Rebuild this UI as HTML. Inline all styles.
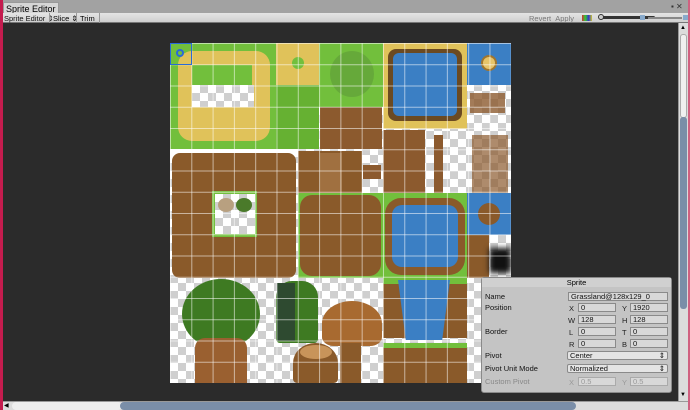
<!DOCTYPE html><html><head><style>
*{margin:0;padding:0;box-sizing:border-box}
body{width:690px;height:410px;overflow:hidden;background:#a2a2a2;font-family:"Liberation Sans",sans-serif;font-size:8px;position:relative}
.a{position:absolute}
.chk{background-color:#fff;background-image:linear-gradient(45deg,#cfcfcf 25%,transparent 25%,transparent 75%,#cfcfcf 75%),linear-gradient(45deg,#cfcfcf 25%,transparent 25%,transparent 75%,#cfcfcf 75%);background-size:16px 16px;background-position:0 0,8px 8px}
.g{background:#72bf3c}.y{background:#e0c25a}.b{background:#3b7fc4}.d{background:#8a5a2a}.w{background:#8c5a2e}
.lbl{position:absolute;left:4px;color:#111}
.fld{position:absolute;height:9px;background:#d8d8d8;border:1px solid #8a8a8a;font-size:7.5px;line-height:8px;padding-left:2px;color:#111}
.sl{position:absolute;color:#222}
</style></head><body>
<div class="a" style="left:0;top:0;width:3px;height:410px;background:#c41c4e"></div>
<div class="a" style="left:688px;top:0;width:2px;height:410px;background:#d06080"></div>
<div class="a" style="left:3px;top:2px;width:56px;height:12px;background:#d6d6d6;border:1px solid #999;border-bottom:none;font-size:9px;padding:1px 2px">Sprite Editor</div>
<div class="a" style="left:3px;top:13px;width:685px;height:10px;background:linear-gradient(#e4e4e4,#cfcfcf);border-bottom:1px solid #777"></div>
<div class="a" style="left:4px;top:14px;font-size:7.5px;color:#111">Sprite Editor ⇕</div>
<div class="a" style="left:49px;top:13px;width:1px;height:10px;background:#999"></div>
<div class="a" style="left:53px;top:14px;font-size:7.5px">Slice ⇕</div>
<div class="a" style="left:76px;top:13px;width:1px;height:10px;background:#999"></div>
<div class="a" style="left:80px;top:14px;font-size:7.5px">Trim</div>
<div class="a" style="left:99px;top:13px;width:1px;height:10px;background:#999"></div>
<div class="a" style="left:529px;top:14px;font-size:7.5px;color:#777">Revert &nbsp;Apply</div>
<div class="a" style="left:582px;top:15px;width:10px;height:6px;background:linear-gradient(90deg,#c33,#3c3,#33c,#cc3)"></div>
<div class="a" style="left:599px;top:16px;width:56px;height:3px;background:#333;border-radius:2px"></div>
<div class="a" style="left:598px;top:14px;width:6px;height:6px;background:#ccc;border:1px solid #333;border-radius:50%"></div>
<div class="a" style="left:640px;top:15px;width:5px;height:5px;background:#8ac"></div>
<div class="a" style="left:648px;top:17px;width:34px;height:2px;background:#888"></div>
<div class="a" style="left:683px;top:15px;width:5px;height:5px;background:#8ac"></div>
<div class="a" style="left:671px;top:2px;font-size:8px;color:#333">▪ ✕</div>
<div class="a" style="left:3px;top:23px;width:675px;height:378px;background:#2b2b2b"></div>
<!-- image -->
<div class="a chk" style="left:170px;top:43px;width:341px;height:340px;overflow:hidden">
<div class="a g" style="left:0;top:0;width:106px;height:106px"></div>
<div class="a y" style="left:8px;top:8px;width:92px;height:90px;border-radius:14px"></div>
<div class="a g" style="left:22px;top:22px;width:60px;height:22px"></div>
<div class="a chk" style="left:22px;top:42px;width:62px;height:22px"></div>
<div class="a y" style="left:106px;top:0;width:43px;height:42px"></div>
<div class="a g" style="left:122px;top:14px;width:12px;height:12px;border-radius:50%"></div>
<div class="a" style="left:106px;top:42px;width:43px;height:64px;background:#66b132"></div>
<div class="a g" style="left:149px;top:0;width:64px;height:64px"></div>
<div class="a" style="left:160px;top:8px;width:44px;height:46px;border-radius:50%;background:#66a93a"></div>
<div class="a w" style="left:150px;top:64px;width:62px;height:42px"></div>
<div class="a y" style="left:213px;top:0;width:84px;height:86px"></div>
<div class="a" style="left:218px;top:6px;width:74px;height:72px;background:#6b4a22;border-radius:8px"></div>
<div class="a b" style="left:223px;top:10px;width:64px;height:63px;border-radius:6px"></div>
<div class="a b" style="left:297px;top:0;width:44px;height:42px"></div>
<div class="a" style="left:311px;top:12px;width:16px;height:16px;border-radius:50%;background:#e6c46a;border:2px solid #a0752e"></div>
<div class="a w" style="left:213px;top:87px;width:42px;height:63px"></div>
<div class="a w" style="left:264px;top:92px;width:9px;height:62px"></div>
<div class="a w" style="left:300px;top:50px;width:35px;height:20px;opacity:.8"></div>
<div class="a w" style="left:302px;top:92px;width:36px;height:58px;opacity:.7"></div>
<div class="a" style="left:0;top:106px;width:128px;height:8px;background:#fff"></div>
<div class="a d" style="left:2px;top:110px;width:124px;height:125px;border-radius:8px"></div>
<div class="a g" style="left:42px;top:148px;width:45px;height:46px"></div>
<div class="a chk" style="left:45px;top:151px;width:40px;height:40px;background-color:#fff"></div>
<div class="a" style="left:48px;top:155px;width:16px;height:14px;background:#b8a080;border-radius:50%"></div>
<div class="a" style="left:66px;top:155px;width:16px;height:14px;background:#4a7a2a;border-radius:50%"></div>
<div class="a d" style="left:128px;top:108px;width:64px;height:42px"></div>
<div class="a" style="left:150px;top:110px;width:22px;height:40px;background:#a07040"></div>
<div class="a w" style="left:193px;top:122px;width:18px;height:14px"></div>
<div class="a g" style="left:128px;top:150px;width:85px;height:85px"></div>
<div class="a d" style="left:130px;top:152px;width:81px;height:81px;border-radius:12px"></div>
<div class="a g" style="left:213px;top:150px;width:84px;height:85px"></div>
<div class="a d" style="left:215px;top:155px;width:80px;height:77px;border-radius:16px"></div>
<div class="a b" style="left:222px;top:162px;width:66px;height:62px;border-radius:10px"></div>
<div class="a b" style="left:297px;top:150px;width:44px;height:42px"></div>
<div class="a d" style="left:308px;top:160px;width:22px;height:22px;border-radius:50%"></div>
<div class="a d" style="left:297px;top:192px;width:22px;height:43px"></div>
<div class="a" style="left:319px;top:205px;width:22px;height:25px;background:#111;filter:blur(3px)"></div>
<div class="a" style="left:12px;top:236px;width:78px;height:70px;border-radius:50%;background:#3e7a22"></div>
<div class="a" style="left:25px;top:295px;width:52px;height:45px;background:#9a6030;border-radius:10px 10px 0 0"></div>
<div class="a" style="left:106px;top:238px;width:42px;height:62px;background:#3e7a22;border-radius:16px 16px 4px 4px"></div>
<div class="a" style="left:107px;top:240px;width:18px;height:58px;background:#2e4a30"></div>
<div class="a" style="left:152px;top:258px;width:60px;height:45px;background:#a86a30;border-radius:50% 50% 20% 20%"></div>
<div class="a d" style="left:213px;top:235px;width:84px;height:60px"></div>
<div class="a g" style="left:213px;top:235px;width:84px;height:6px"></div>
<div class="a b" style="left:228px;top:237px;width:52px;height:60px;clip-path:polygon(0 0,100% 0,85% 100%,15% 100%)"></div>
<div class="a d" style="left:123px;top:300px;width:45px;height:40px;border-radius:50% 50% 10% 10%"></div>
<div class="a" style="left:130px;top:302px;width:32px;height:14px;background:#c8945a;border-radius:50%"></div>
<div class="a d" style="left:170px;top:300px;width:21px;height:40px"></div>
<div class="a d" style="left:213px;top:300px;width:84px;height:40px"></div>
<div class="a g" style="left:213px;top:300px;width:84px;height:5px"></div>
<div class="a d" style="left:318px;top:300px;width:23px;height:40px"></div>
<div class="a" style="left:0;top:0;width:341px;height:340px;background-image:linear-gradient(90deg,rgba(255,255,255,.55) 1px,transparent 1px),linear-gradient(rgba(255,255,255,.55) 1px,transparent 1px);background-size:21.3px 21.25px"></div>
</div>
<div class="a" style="left:170px;top:43px;width:22px;height:22px;border:1px solid #2a6ad8"></div>
<div class="a" style="left:176px;top:49px;width:8px;height:8px;border:2px solid #2a6ad8;border-radius:50%"></div>
<!-- panel -->
<div class="a" style="left:481px;top:277px;width:191px;height:116px;background:#c4c4c4;border:1px solid #8a8a8a;border-radius:3px"></div>
<div class="a" style="left:482px;top:278px;width:189px;height:9px;background:#d0d0d0;text-align:center;font-size:7.5px;line-height:9px">Sprite</div>
<div class="a" style="left:481px;top:291px;width:191px;height:100px;font-size:7.5px">
<div class="lbl" style="top:1px">Name</div>
<div class="lbl" style="top:12px">Position</div>
<div class="lbl" style="top:36px">Border</div>
<div class="lbl" style="top:60px">Pivot</div>
<div class="lbl" style="top:73px">Pivot Unit Mode</div>
<div class="lbl" style="top:86px;color:#888">Custom Pivot</div>
<div class="fld" style="left:87px;top:1px;width:100px">Grassland@128x129_0</div>
<div class="sl" style="left:88px;top:13px">X</div><div class="fld" style="left:97px;top:12px;width:38px">0</div>
<div class="sl" style="left:141px;top:13px">Y</div><div class="fld" style="left:149px;top:12px;width:38px">1920</div>
<div class="sl" style="left:87px;top:25px">W</div><div class="fld" style="left:97px;top:24px;width:38px">128</div>
<div class="sl" style="left:141px;top:25px">H</div><div class="fld" style="left:149px;top:24px;width:38px">128</div>
<div class="sl" style="left:88px;top:37px">L</div><div class="fld" style="left:97px;top:36px;width:38px">0</div>
<div class="sl" style="left:141px;top:37px">T</div><div class="fld" style="left:149px;top:36px;width:38px">0</div>
<div class="sl" style="left:88px;top:49px">R</div><div class="fld" style="left:97px;top:48px;width:38px">0</div>
<div class="sl" style="left:141px;top:49px">B</div><div class="fld" style="left:149px;top:48px;width:38px">0</div>
<div class="fld" style="left:86px;top:60px;width:101px;background:#e4e4e4;border-radius:2px">Center<span style="float:right;padding-right:2px">⇕</span></div>
<div class="fld" style="left:86px;top:73px;width:101px;background:#e4e4e4;border-radius:2px">Normalized<span style="float:right;padding-right:2px">⇕</span></div>
<div class="sl" style="left:88px;top:87px;color:#999">X</div><div class="fld" style="left:97px;top:86px;width:38px;color:#999;border-color:#aaa">0.5</div>
<div class="sl" style="left:141px;top:87px;color:#999">Y</div><div class="fld" style="left:149px;top:86px;width:38px;color:#999;border-color:#aaa">0.5</div>
</div>
<!-- scrollbars -->
<div class="a" style="left:678px;top:23px;width:10px;height:378px;background:#dcdcdc;border-left:1px solid #999"></div>
<div class="a" style="left:680px;top:34px;width:7px;height:84px;background:#f0f0f0;border:1px solid #aaa;border-radius:3px"></div>
<div class="a" style="left:680px;top:117px;width:7px;height:192px;background:#7a8ea8;border-radius:3px"></div>
<div class="a" style="left:680px;top:25px;font-size:6px">▲</div>
<div class="a" style="left:680px;top:392px;font-size:6px">▼</div>
<div class="a" style="left:3px;top:401px;width:685px;height:9px;background:#dcdcdc;border-top:1px solid #999"></div>
<div class="a" style="left:12px;top:402px;width:110px;height:8px;background:#eee;border-radius:4px"></div>
<div class="a" style="left:120px;top:402px;width:456px;height:8px;background:#7a8ea8;border-radius:4px"></div>
<div class="a" style="left:4px;top:402px;font-size:6px">◀</div>
</body></html>
